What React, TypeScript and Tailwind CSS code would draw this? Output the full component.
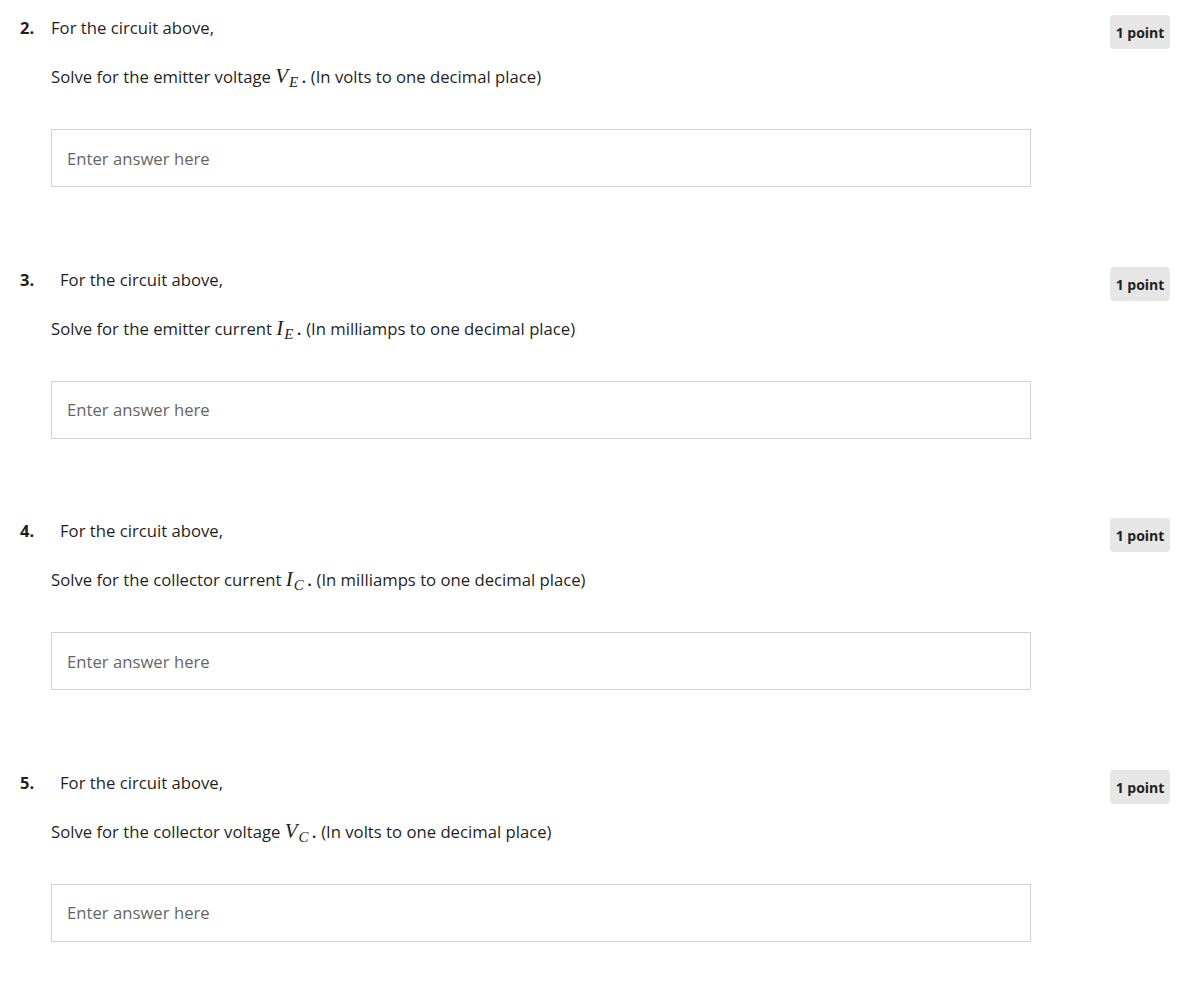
import React from 'react';

type Question = {
  num: number;
  indent: boolean;
  before: string;
  sym: string;
  sub: string;
  after: string;
};

const questions: Question[] = [
  { num: 2, indent: false, before: 'Solve for the emitter voltage ', sym: 'V', sub: 'E', after: '(In volts to one decimal place)' },
  { num: 3, indent: true, before: 'Solve for the emitter current ', sym: 'I', sub: 'E', after: '(In milliamps to one decimal place)' },
  { num: 4, indent: true, before: 'Solve for the collector current ', sym: 'I', sub: 'C', after: '(In milliamps to one decimal place)' },
  { num: 5, indent: true, before: 'Solve for the collector voltage ', sym: 'V', sub: 'C', after: '(In volts to one decimal place)' },
];

const MathSym: React.FC<{ sym: string; sub: string }> = ({ sym, sub }) => (
  <span className="font-['Liberation_Serif',serif] text-[21px] italic leading-none">
    {sym}
    <span className="relative top-[4px] pl-px text-[15px]">{sub}</span>
    <span className="pl-[3px] not-italic">.</span>
  </span>
);

const QuestionBlock: React.FC<{ q: Question }> = ({ q }) => (
  <div className="flex h-[251.67px] items-start">
    <div className="w-[31px] pt-px text-[16.5px] font-bold leading-6 text-[#1f1f1f]">{q.num}.</div>
    <div className="flex-1">
      <p className={`pt-px text-[16.7px] leading-6 text-[#1f1f1f] ${q.indent ? 'pl-[9px]' : ''}`}>
        For the circuit above,
      </p>
      <p className="mt-[25px] text-[16.7px] leading-6 text-[#1f1f1f]">
        {q.before}
        <MathSym sym={q.sym} sub={q.sub} /> {q.after}
      </p>
      <input
        type="text"
        placeholder="Enter answer here"
        className="mt-[40px] block h-[58px] w-[980px] border border-[#d1d1d1] bg-white px-[15px] text-[16.7px] text-[#1f1f1f] outline-none placeholder:text-[#666666]"
      />
    </div>
    <span className="w-[60px] rounded-[4px] bg-[#e6e6e6] pb-[6px] pt-[8px] text-center text-[14px] font-bold leading-5 text-[#1f1f1f]">
      1 point
    </span>
  </div>
);

const App: React.FC = () => {
  return (
    <div className="min-h-screen bg-white pl-5 pr-[29px] pt-[15px] font-['Open_Sans',sans-serif]">
      {questions.map((q) => (
        <QuestionBlock key={q.num} q={q} />
      ))}
    </div>
  );
};

export default App;
